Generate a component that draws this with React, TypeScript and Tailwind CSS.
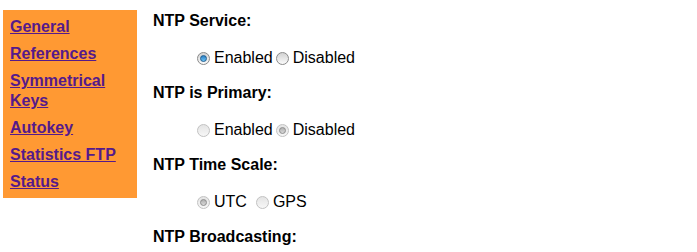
import React from "react"

// ============================================
// DATA
// ============================================

const NAV_LINKS = ["General", "References", "Symmetrical Keys", "Autokey", "Statistics FTP", "Status"]

type RadioOpt = { label: string; checked?: boolean; disabled?: boolean; gap?: string }

const SECTIONS: { title: string; options: RadioOpt[] }[] = [
  {
    title: "NTP Service:",
    options: [{ label: "Enabled", checked: true }, { label: "Disabled", gap: "ml-[3px]" }],
  },
  {
    title: "NTP is Primary:",
    options: [
      { label: "Enabled", disabled: true },
      { label: "Disabled", checked: true, disabled: true, gap: "ml-[3px]" },
    ],
  },
  {
    title: "NTP Time Scale:",
    options: [
      { label: "UTC", checked: true, disabled: true },
      { label: "GPS", disabled: true, gap: "ml-[9px]" },
    ],
  },
  { title: "NTP Broadcasting:", options: [] },
]

// ============================================
// RADIO (old windows look)
// ============================================

function Radio({ checked, disabled }: { checked?: boolean; disabled?: boolean }) {
  return (
    <span
      className={
        disabled
          ? "flex h-[13px] w-[13px] items-center justify-center rounded-full border border-[#c2c2c2] bg-linear-to-b from-[#e4e4e4] to-[#f7f7f7]"
          : "flex h-[13px] w-[13px] items-center justify-center rounded-full border border-[#8a8a8a] bg-linear-to-b from-[#d2d2d2] to-[#fbfbfb]"
      }
    >
      {checked && (
        <span
          className={
            disabled
              ? "h-[7px] w-[7px] rounded-full border border-[#8c8c8c] bg-linear-to-b from-[#b0b0b0] to-[#d8d8d8]"
              : "h-[7px] w-[7px] rounded-full border border-[#1d5c8f] bg-linear-to-b from-[#2a7fc4] to-[#6cc3f5]"
          }
        />
      )}
    </span>
  )
}

// ============================================
// APP
// ============================================

export default function App() {
  return (
    <div className="flex bg-white text-[16px] text-black" style={{ fontFamily: '"Liberation Sans", Arial, sans-serif' }}>
      {/* Sidebar */}
      <div className="ml-[3px] mt-[10px] flex h-[188px] w-[134px] shrink-0 flex-col gap-[7px] bg-[#ff9933] pl-[7px] pr-[4px] pt-[7px]">
        {NAV_LINKS.map((l) => (
          <a key={l} href="#" className="font-bold leading-[20px] text-[#551a8b] underline">
            {l}
          </a>
        ))}
      </div>

      {/* Settings */}
      <div className="ml-[16px] flex flex-col pt-[12px]">
        {SECTIONS.map((s) => (
          <div key={s.title} className="mb-[17px]">
            <div className="font-bold leading-[18px]">{s.title}</div>
            {s.options.length > 0 && (
              <div className="ml-[44px] mt-[19px] flex h-[18px] items-center leading-[18px]">
                {s.options.map((o) => (
                  <div key={o.label} className={`flex items-center ${o.gap ?? ""}`}>
                    <Radio checked={o.checked} disabled={o.disabled} />
                    <span className="ml-[4px]">{o.label}</span>
                  </div>
                ))}
              </div>
            )}
          </div>
        ))}
      </div>
    </div>
  )
}
